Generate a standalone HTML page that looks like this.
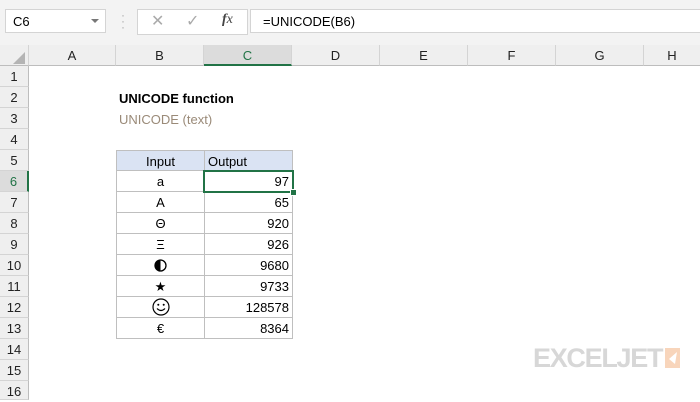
<!DOCTYPE html><html><head><style>
body{margin:0;width:700px;height:400px;overflow:hidden;background:#fff;font-family:"Liberation Sans",sans-serif;position:relative}
.a{position:absolute}
.ch{position:absolute;top:45px;height:21px;border-right:1px solid #d4d4d4;border-bottom:1px solid #bdbdbd;background:#efefef;text-align:center;font-size:13px;line-height:21px;color:#222;box-sizing:border-box}
.rh{position:absolute;left:0;width:29px;height:21px;border-bottom:1px solid #d4d4d4;border-right:1px solid #bdbdbd;background:#efefef;text-align:center;font-size:13px;line-height:21px;color:#222;box-sizing:border-box}
.c{position:absolute;height:21px;box-sizing:border-box;font-size:13px;line-height:21px;border-right:1px solid #bfbfbf;border-bottom:1px solid #bfbfbf}
.h{position:absolute;left:2px;top:0;color:transparent}
</style></head><body>
<div class="a" style="left:0;top:0;width:700px;height:45px;background:#f3f3f3"></div>
<div class="a" style="left:5px;top:9px;width:101px;height:24px;background:#fff;border:1px solid #d4d4d4;font-size:13px;line-height:24px;padding-left:7px;box-sizing:border-box">C6</div>
<div class="a" style="left:91px;top:19px;width:0;height:0;border-left:4px solid transparent;border-right:4px solid transparent;border-top:4px solid #777"></div>
<div class="a" style="left:121px;top:12px;color:#aaa;font-size:12px;line-height:6px">·<br>·<br>·</div>
<div class="a" style="left:137px;top:9px;width:109px;height:24px;background:#fff;border:1px solid #d4d4d4"></div>
<div class="a" style="left:151px;top:11px;color:#aaa;font-size:16px">✕</div>
<div class="a" style="left:186px;top:11px;color:#aaa;font-size:16px">✓</div>
<div class="a" style="left:222px;top:12px;color:#444;font-size:14px;font-style:italic;font-family:'Liberation Serif',serif"><b>f</b>x</div>
<div class="a" style="left:250px;top:9px;width:450px;height:24px;background:#fff;border:1px solid #d4d4d4;border-right:none;font-size:13px;line-height:24px;padding-left:12px;box-sizing:border-box">=UNICODE(B6)</div>
<div class="ch" style="left:0;width:29px"></div>
<div class="a" style="left:13px;top:52px;width:0;height:0;border-left:12px solid transparent;border-bottom:12px solid #b4b4b4"></div>
<div class="ch" style="left:29px;width:87px">A</div>
<div class="ch" style="left:116px;width:88px">B</div>
<div class="ch" style="left:204px;width:88px;background:#dcdcdc;color:#217346;border-bottom:2px solid #217346">C</div>
<div class="ch" style="left:292px;width:88px">D</div>
<div class="ch" style="left:380px;width:88px">E</div>
<div class="ch" style="left:468px;width:88px">F</div>
<div class="ch" style="left:556px;width:88px">G</div>
<div class="ch" style="left:644px;width:56px;border-right:none">H</div>
<div class="rh" style="top:66px">1</div><div class="rh" style="top:87px">2</div><div class="rh" style="top:108px">3</div><div class="rh" style="top:129px">4</div><div class="rh" style="top:150px">5</div>
<div class="rh" style="top:171px;background:#dcdcdc;color:#217346;border-right:2px solid #217346">6</div>
<div class="rh" style="top:192px">7</div><div class="rh" style="top:213px">8</div><div class="rh" style="top:234px">9</div><div class="rh" style="top:255px">10</div><div class="rh" style="top:276px">11</div><div class="rh" style="top:297px">12</div><div class="rh" style="top:318px">13</div><div class="rh" style="top:339px">14</div><div class="rh" style="top:360px">15</div><div class="rh" style="top:381px;height:19px">16</div>
<div class="a" style="left:119px;top:90px;font-size:13px;font-weight:bold;line-height:17px">UNICODE function</div>
<div class="a" style="left:119px;top:111px;font-size:13px;color:#9a8a78;line-height:17px">UNICODE (text)</div>
<div class="a" style="left:116px;top:150px;width:177px;height:1px;background:#bfbfbf"></div>
<div class="a" style="left:116px;top:150px;width:1px;height:189px;background:#bfbfbf"></div>
<div class="c" style="left:117px;top:151px;width:88px;height:20px;background:#dae3f3;text-align:center">Input</div>
<div class="c" style="left:205px;top:151px;width:88px;height:20px;background:#dae3f3;padding-left:3px">Output</div>
<div class="c" style="left:117px;top:171px;width:88px;text-align:center">a</div><div class="c" style="left:205px;top:171px;width:88px;text-align:right;padding-right:3px">97</div>
<div class="c" style="left:117px;top:192px;width:88px;text-align:center">A</div><div class="c" style="left:205px;top:192px;width:88px;text-align:right;padding-right:3px">65</div>
<div class="c" style="left:117px;top:213px;width:88px;text-align:center">Θ</div><div class="c" style="left:205px;top:213px;width:88px;text-align:right;padding-right:3px">920</div>
<div class="c" style="left:117px;top:234px;width:88px;text-align:center">Ξ</div><div class="c" style="left:205px;top:234px;width:88px;text-align:right;padding-right:3px">926</div>
<div class="c" style="left:117px;top:255px;width:88px;text-align:center"><span class="h">◐</span><svg width="13" height="13" style="vertical-align:-2px"><circle cx="6.5" cy="6.5" r="5.5" fill="#fff" stroke="#000" stroke-width="1.3"/><path d="M6.5 1 A5.5 5.5 0 0 0 6.5 12 Z" fill="#000"/></svg></div><div class="c" style="left:205px;top:255px;width:88px;text-align:right;padding-right:3px">9680</div>
<div class="c" style="left:117px;top:276px;width:88px;text-align:center">★</div><div class="c" style="left:205px;top:276px;width:88px;text-align:right;padding-right:3px">9733</div>
<div class="c" style="left:117px;top:297px;width:88px;text-align:center"><span class="h">☺</span><svg width="18" height="18" style="vertical-align:-4px"><circle cx="9" cy="9" r="8" fill="none" stroke="#000" stroke-width="1.2"/><circle cx="6.3" cy="6.8" r="1" fill="#000"/><circle cx="11.7" cy="6.8" r="1" fill="#000"/><path d="M5 10.5 Q9 14.5 13 10.5" fill="none" stroke="#000" stroke-width="1.2"/></svg></div><div class="c" style="left:205px;top:297px;width:88px;text-align:right;padding-right:3px">128578</div>
<div class="c" style="left:117px;top:318px;width:88px;text-align:center">€</div><div class="c" style="left:205px;top:318px;width:88px;text-align:right;padding-right:3px">8364</div>
<div class="a" style="left:203px;top:170px;width:91px;height:23px;border:2px solid #217346;box-sizing:border-box"></div>
<div class="a" style="left:290px;top:189px;width:5px;height:5px;background:#217346;border:1px solid #fff"></div>
<div class="a" style="left:533px;top:343px;font-size:27px;font-weight:bold;color:#d7d7d7;letter-spacing:-1.3px;line-height:30px">EXCELJET</div>
<div class="a" style="left:665px;top:348px;width:15px;height:20px;background:#f8d5bb"></div>
<svg class="a" style="left:665px;top:348px" width="15" height="20"><path d="M12 4 L4 11 L10 16 Z" fill="#fff"/></svg>
</body></html>
